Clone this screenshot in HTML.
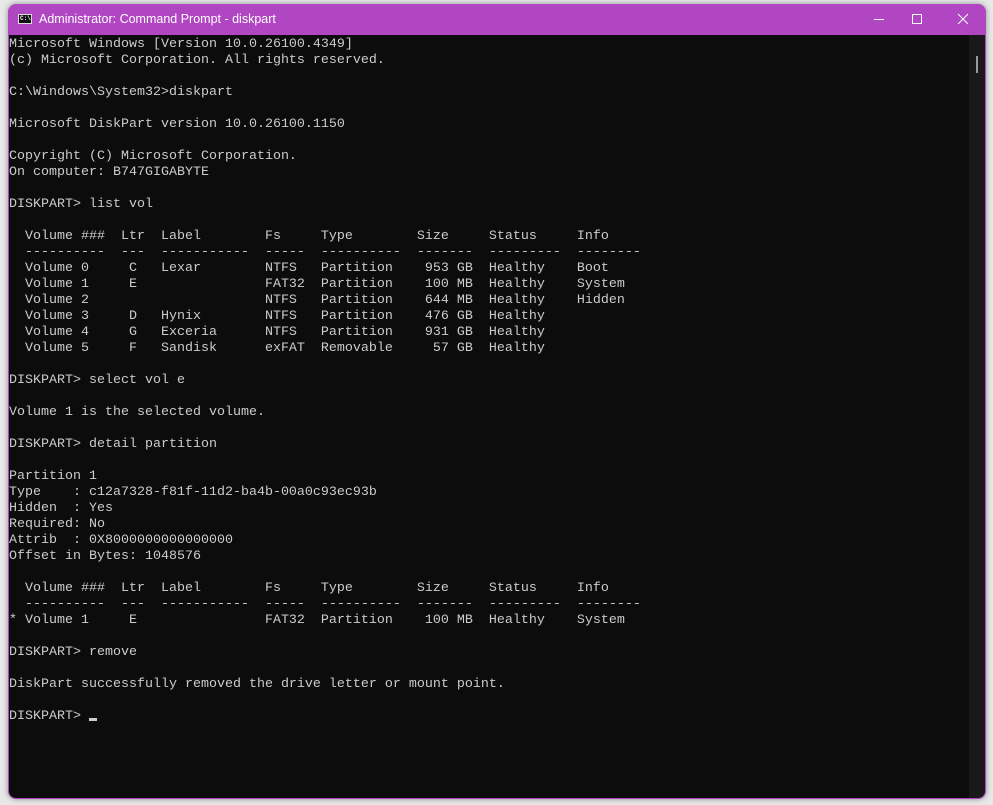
<!DOCTYPE html>
<html><head><style>
body{margin:0;width:993px;height:805px;background:#e8e8e8;position:relative;overflow:hidden;font-family:"Liberation Sans",sans-serif}
.win{position:absolute;left:8px;top:4px;width:978px;height:795px;background:#b146c2;border-radius:8px;overflow:hidden;box-shadow:0 0 6px rgba(0,0,0,.4)}
.title{position:absolute;left:0;top:0;width:100%;height:31px;color:#fff;font-size:12.5px}
.title .t{position:absolute;left:31px;top:8px}
.icon{position:absolute;left:10px;top:10px;width:14px;height:10px;background:#111;border:1px solid #ddd;box-sizing:border-box;font:bold 6px "Liberation Mono",monospace;color:#fff;line-height:8px;padding-left:1px}
.ctl{position:absolute;top:0;height:31px;width:46px}
.term{position:absolute;left:1px;top:31px;width:960px;height:763px;background:#0c0c0c;border-bottom-left-radius:7px}
.sb{position:absolute;left:961px;top:31px;width:16px;height:763px;background:#191919;border-bottom-right-radius:7px}
.sb i{position:absolute;left:7px;top:21px;width:2px;height:17px;background:#9a9a9a}
pre{margin:0;position:absolute;left:0;top:2px;color:#cccccc;font:13.33px/16px "Liberation Mono",monospace;white-space:pre}
.cur{display:inline-block;width:8px;height:3px;background:#ccc;vertical-align:-2px}
</style></head><body>
<div class="win">
 <div class="title"><div class="icon">C:\</div><span class="t">Administrator: Command Prompt - diskpart</span>
  <svg class="ctl" style="left:848px" viewBox="0 0 46 31"><line x1="18" y1="15.5" x2="28" y2="15.5" stroke="#fff"/></svg>
  <svg class="ctl" style="left:886px" viewBox="0 0 46 31"><rect x="18.5" y="10.5" width="9" height="9" fill="none" stroke="#fff"/></svg>
  <svg class="ctl" style="left:932px" viewBox="0 0 46 31"><path d="M18 10L28 20M28 10L18 20" stroke="#fff"/></svg>
 </div>
 <div class="term"><pre>Microsoft Windows [Version 10.0.26100.4349]
(c) Microsoft Corporation. All rights reserved.

C:\Windows\System32&gt;diskpart

Microsoft DiskPart version 10.0.26100.1150

Copyright (C) Microsoft Corporation.
On computer: B747GIGABYTE

DISKPART&gt; list vol

  Volume ###  Ltr  Label        Fs     Type        Size     Status     Info
  ----------  ---  -----------  -----  ----------  -------  ---------  --------
  Volume 0     C   Lexar        NTFS   Partition    953 GB  Healthy    Boot
  Volume 1     E                FAT32  Partition    100 MB  Healthy    System
  Volume 2                      NTFS   Partition    644 MB  Healthy    Hidden
  Volume 3     D   Hynix        NTFS   Partition    476 GB  Healthy
  Volume 4     G   Exceria      NTFS   Partition    931 GB  Healthy
  Volume 5     F   Sandisk      exFAT  Removable     57 GB  Healthy

DISKPART&gt; select vol e

Volume 1 is the selected volume.

DISKPART&gt; detail partition

Partition 1
Type    : c12a7328-f81f-11d2-ba4b-00a0c93ec93b
Hidden  : Yes
Required: No
Attrib  : 0X8000000000000000
Offset in Bytes: 1048576

  Volume ###  Ltr  Label        Fs     Type        Size     Status     Info
  ----------  ---  -----------  -----  ----------  -------  ---------  --------
* Volume 1     E                FAT32  Partition    100 MB  Healthy    System

DISKPART&gt; remove

DiskPart successfully removed the drive letter or mount point.

DISKPART&gt; <span class="cur"></span></pre></div>
 <div class="sb"><i></i></div>
</div>
</body></html>
